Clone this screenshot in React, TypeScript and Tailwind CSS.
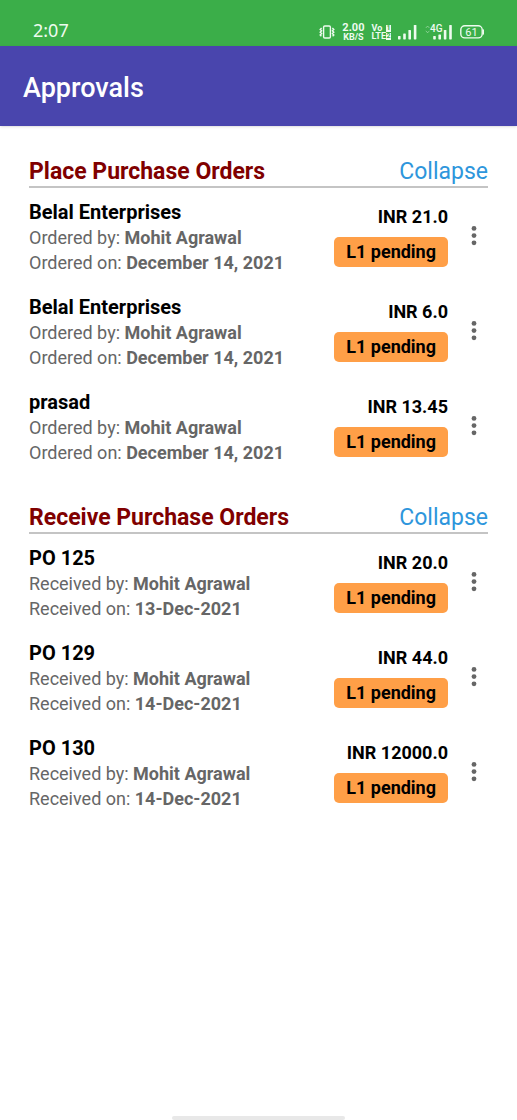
import { useState } from "react";

interface Order {
  id: number;
  title: string;
  person: string;
  date: string;
  amount: string;
}

interface OrderSectionProps {
  title: string;
  verb: string;
  orders: Order[];
}

const placeOrders: Order[] = [
  { id: 1, title: "Belal Enterprises", person: "Mohit Agrawal", date: "December 14, 2021", amount: "INR 21.0" },
  { id: 2, title: "Belal Enterprises", person: "Mohit Agrawal", date: "December 14, 2021", amount: "INR 6.0" },
  { id: 3, title: "prasad", person: "Mohit Agrawal", date: "December 14, 2021", amount: "INR 13.45" },
];

const receiveOrders: Order[] = [
  { id: 4, title: "PO 125", person: "Mohit Agrawal", date: "13-Dec-2021", amount: "INR 20.0" },
  { id: 5, title: "PO 129", person: "Mohit Agrawal", date: "14-Dec-2021", amount: "INR 44.0" },
  { id: 6, title: "PO 130", person: "Mohit Agrawal", date: "14-Dec-2021", amount: "INR 12000.0" },
];

function VibrateIcon() {
  return (
    <svg className="h-4 w-4" viewBox="0 0 16 16" fill="none" stroke="currentColor" aria-hidden="true">
      <rect x="4.6" y="2" width="6.8" height="12" rx="1.2" strokeWidth="1.4" />
      <path d="M2.6 4 1.2 5.4 2.6 6.8 1.2 8.2 2.6 9.6 1.2 11 2.4 12.2M13.4 4l1.4 1.4-1.4 1.4 1.4 1.4-1.4 1.4 1.4 1.4-1.2 1.2" strokeWidth="1.4" />
    </svg>
  );
}

function SimBadge({ children }: { children: string }) {
  return (
    <span className="flex h-[7px] w-[5px] items-center justify-center bg-[#eefbef] text-[7px] leading-none text-[#3bae49]">
      {children}
    </span>
  );
}

function SignalIcon() {
  return (
    <svg className="h-4 w-5" viewBox="0 0 20 16" fill="currentColor" aria-hidden="true">
      <rect x="0" y="12" width="2.6" height="3.4" rx="0.6" />
      <rect x="5.2" y="9.5" width="2.6" height="5.9" rx="0.6" />
      <rect x="10.4" y="6" width="2.6" height="9.4" rx="0.6" />
      <rect x="15.8" y="1" width="2.6" height="14.4" rx="0.6" />
    </svg>
  );
}

function MobileDataIcon() {
  return (
    <svg className="h-4 w-7" viewBox="0 0 28 16" fill="currentColor" aria-hidden="true">
      <path d="m.8 4 1.8-2 1.8 2M.8 6.8l1.8 2 1.8-2" fill="none" stroke="currentColor" opacity="0.4" />
      <text x="5" y="8.4" fontSize="10" fontWeight="500" fontFamily="Roboto, sans-serif">4G</text>
      <rect x="8.2" y="12" width="2.6" height="3.4" rx="0.6" />
      <rect x="13.4" y="10.4" width="2.6" height="5" rx="0.6" />
      <rect x="18.8" y="6" width="2.6" height="9.4" rx="0.6" />
      <rect x="24.2" y="1" width="2.6" height="14.4" rx="0.6" />
    </svg>
  );
}

function BatteryIcon() {
  return (
    <svg className="h-4 w-6" viewBox="0 0 24 16" fill="none" aria-hidden="true">
      <rect x="0.8" y="1.7" width="21.4" height="12.2" rx="4" stroke="currentColor" strokeWidth="1.4" />
      <path d="M23.3 6v4" stroke="currentColor" strokeWidth="1.4" strokeLinecap="round" />
      <text x="11.5" y="11.8" fill="currentColor" fontSize="11" fontFamily="Roboto, sans-serif" textAnchor="middle">61</text>
    </svg>
  );
}

function StatusBar() {
  return (
    <div className="flex h-[46px] items-end justify-between bg-[#3bae49] px-[33px] text-[#eefbef]">
      <span className="pb-1 font-['Noto_Sans',sans-serif] text-lg leading-6">2:07</span>
      <div className="flex h-7 items-center gap-[7px]">
        <VibrateIcon />
        <div className="flex flex-col items-center font-bold">
          <span className="text-[11px] leading-[11px]">2.00</span>
          <span className="text-[9px] leading-[9px]">KB/S</span>
        </div>
        <div className="flex flex-col text-[9px] leading-[8px] font-bold">
          <span className="flex items-center justify-between">Vo<SimBadge>1</SimBadge></span>
          <span className="flex items-center justify-between">LTE<SimBadge>2</SimBadge></span>
        </div>
        <SignalIcon />
        <MobileDataIcon />
        <BatteryIcon />
      </div>
    </div>
  );
}

function OrderRow({ order, verb }: { order: Order; verb: string }) {
  return (
    <li className="flex items-start">
      <div className="min-w-0 flex-1 text-lg leading-[25px] text-[#666]">
        <h3 className="text-xl leading-[25px] font-bold text-black">{order.title}</h3>
        <p>
          {verb} by: <span className="font-bold">{order.person}</span>
        </p>
        <p>
          {verb} on: <span className="font-bold">{order.date}</span>
        </p>
      </div>
      <div className="flex flex-col items-end gap-2 pt-[5px] text-lg leading-6 font-bold text-black">
        <span>{order.amount}</span>
        <span className="rounded-[5px] bg-[#ff9f47] px-3 py-[3px]">L1 pending</span>
      </div>
      <button
        type="button"
        aria-label={`Options for ${order.title}`}
        className="ml-3 flex h-[71px] w-7 items-center justify-center text-[#666]"
      >
        <svg className="h-5 w-1.5" viewBox="0 0 6 20" fill="currentColor" aria-hidden="true">
          <circle cx="3" cy="2.4" r="2.4" />
          <circle cx="3" cy="9.6" r="2.4" />
          <circle cx="3" cy="16.8" r="2.4" />
        </svg>
      </button>
    </li>
  );
}

function OrderSection({ title, verb, orders }: OrderSectionProps) {
  const [open, setOpen] = useState(true);

  return (
    <section>
      <div className="flex h-8 items-center justify-between border-b-2 border-[#c4c4c4] pt-0.5 text-[23px] leading-7">
        <h2 className="font-bold text-[#800000]">{title}</h2>
        <button
          type="button"
          aria-expanded={open}
          onClick={() => setOpen(!open)}
          className="text-[#2e96dc]"
        >
          {open ? "Collapse" : "Expand"}
        </button>
      </div>
      {open && (
        <ul className="flex flex-col gap-5 pt-3">
          {orders.map((order) => (
            <OrderRow key={order.id} order={order} verb={verb} />
          ))}
        </ul>
      )}
    </section>
  );
}

export default function App() {
  return (
    <div className="flex min-h-screen flex-col bg-white font-[Roboto,sans-serif]">
      <StatusBar />
      <header className="flex h-20 items-center bg-[#4945ad] px-[23px] pt-[3px] shadow-sm">
        <h1 className="text-[27px] leading-8 font-medium text-white">Approvals</h1>
      </header>
      <main className="flex flex-1 flex-col gap-[37px] px-[29px] pt-[30px] pb-10">
        <OrderSection title="Place Purchase Orders" verb="Ordered" orders={placeOrders} />
        <OrderSection title="Receive Purchase Orders" verb="Received" orders={receiveOrders} />
      </main>
      <div className="mx-auto h-1 w-1/3 rounded-full bg-[#e8e8e8]" />
    </div>
  );
}
